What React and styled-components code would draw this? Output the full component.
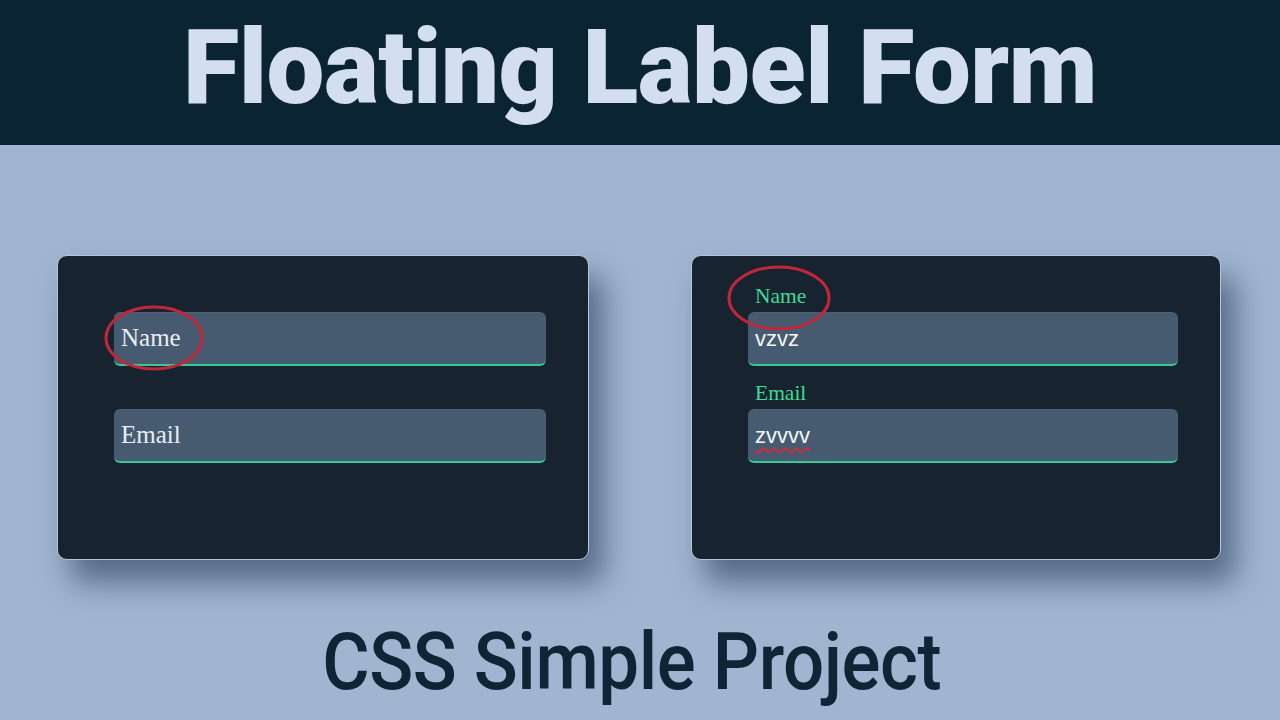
import React from "react";
import styled, { createGlobalStyle } from "styled-components";

const GlobalStyle = createGlobalStyle`
  html, body {
    margin: 0;
    padding: 0;
    background: #a0b5cf;
  }
  body {
    width: 1280px;
    height: 720px;
    overflow: hidden;
  }
`;

const Page = styled.div`
  width: 1280px;
  height: 720px;
  display: flex;
  flex-direction: column;
  background: #a0b5cf;
`;

const Header = styled.header`
  height: 145px;
  box-sizing: border-box;
  padding-top: 16px;
  background: #0b2433;
  display: flex;
  justify-content: center;
`;

const Title = styled.h1`
  margin: 0;
  font-family: Roboto, "Liberation Sans", sans-serif;
  font-weight: 900;
  font-size: 103px;
  line-height: 1;
  color: #d3dfee;
  letter-spacing: -0.5px;
`;

const Stage = styled.main`
  display: flex;
  gap: 102px;
  padding: 110px 0 0 57px;
`;

const Card = styled.section`
  position: relative;
  width: ${(p) => p.$width}px;
  height: 305px;
  box-sizing: border-box;
  padding: 56px 42px 0 56px;
  background: #17232f;
  border: 1px solid #b5c6db;
  border-radius: 10px;
  box-shadow: 14px 22px 30px rgba(35, 55, 85, 0.6);
  display: flex;
  flex-direction: column;
  gap: 43px;
`;

const Field = styled.div`
  position: relative;
`;

const InputBox = styled.div`
  height: 54px;
  box-sizing: border-box;
  background: #465b70;
  border-radius: 6px;
  border-bottom: 2px solid #36c996;
  box-shadow: inset 0 1px 0 rgba(255, 255, 255, 0.04);
  display: flex;
  align-items: center;
  padding: 0 7px;
`;

const Value = styled.span`
  font-family: "Liberation Sans", Arial, sans-serif;
  font-size: 22px;
  color: #f4f7fa;
  padding-top: 2px;
  text-decoration: ${(p) => (p.$misspelled ? "underline wavy #d22a3c" : "none")};
  text-decoration-thickness: 1.5px;
  text-underline-offset: 4px;
`;

const Label = styled.label`
  position: absolute;
  left: 7px;
  top: ${(p) => (p.$floated ? "-28px" : "11px")};
  font-family: "Liberation Serif", "Times New Roman", serif;
  font-size: ${(p) => (p.$floated ? "21.5px" : "25px")};
  color: ${(p) => (p.$floated ? "#3ddc97" : "#e8eef4")};
  line-height: 1.2;
`;

const Marker = styled.svg`
  position: absolute;
  left: ${(p) => p.$x}px;
  top: ${(p) => p.$y}px;
  overflow: visible;
  pointer-events: none;
`;

const Footer = styled.div`
  margin-top: 63px;
  padding-right: 18px;
  text-align: center;
  font-family: Roboto, "Liberation Sans", sans-serif;
  font-weight: 500;
  font-size: 79px;
  line-height: 1;
  letter-spacing: -0.5px;
  color: #0d2535;
  transform: scaleX(0.92);
`;

function Circle({ x, y, rx, ry }) {
  return (
    <Marker $x={x - rx - 3} $y={y - ry - 3} width={rx * 2 + 6} height={ry * 2 + 6}>
      <ellipse
        cx={rx + 3}
        cy={ry + 3}
        rx={rx}
        ry={ry}
        fill="none"
        stroke="#c1273a"
        strokeWidth="3"
      />
    </Marker>
  );
}

function FloatField({ label, value, misspelled }) {
  const floated = Boolean(value);
  return (
    <Field>
      <InputBox>{value && <Value $misspelled={misspelled}>{value}</Value>}</InputBox>
      <Label $floated={floated}>{label}</Label>
    </Field>
  );
}

export default function App() {
  return (
    <>
      <GlobalStyle />
      <Page>
        <Header>
          <Title>Floating Label Form</Title>
        </Header>
        <Stage>
          <Card $width={532}>
            <FloatField label="Name" />
            <FloatField label="Email" />
            <Circle x={96} y={82} rx={48} ry={31} />
          </Card>
          <Card $width={530}>
            <FloatField label="Name" value="vzvz" />
            <FloatField label="Email" value="zvvvv" misspelled />
            <Circle x={87} y={42} rx={50} ry={31} />
          </Card>
        </Stage>
        <Footer>CSS Simple Project</Footer>
      </Page>
    </>
  );
}
